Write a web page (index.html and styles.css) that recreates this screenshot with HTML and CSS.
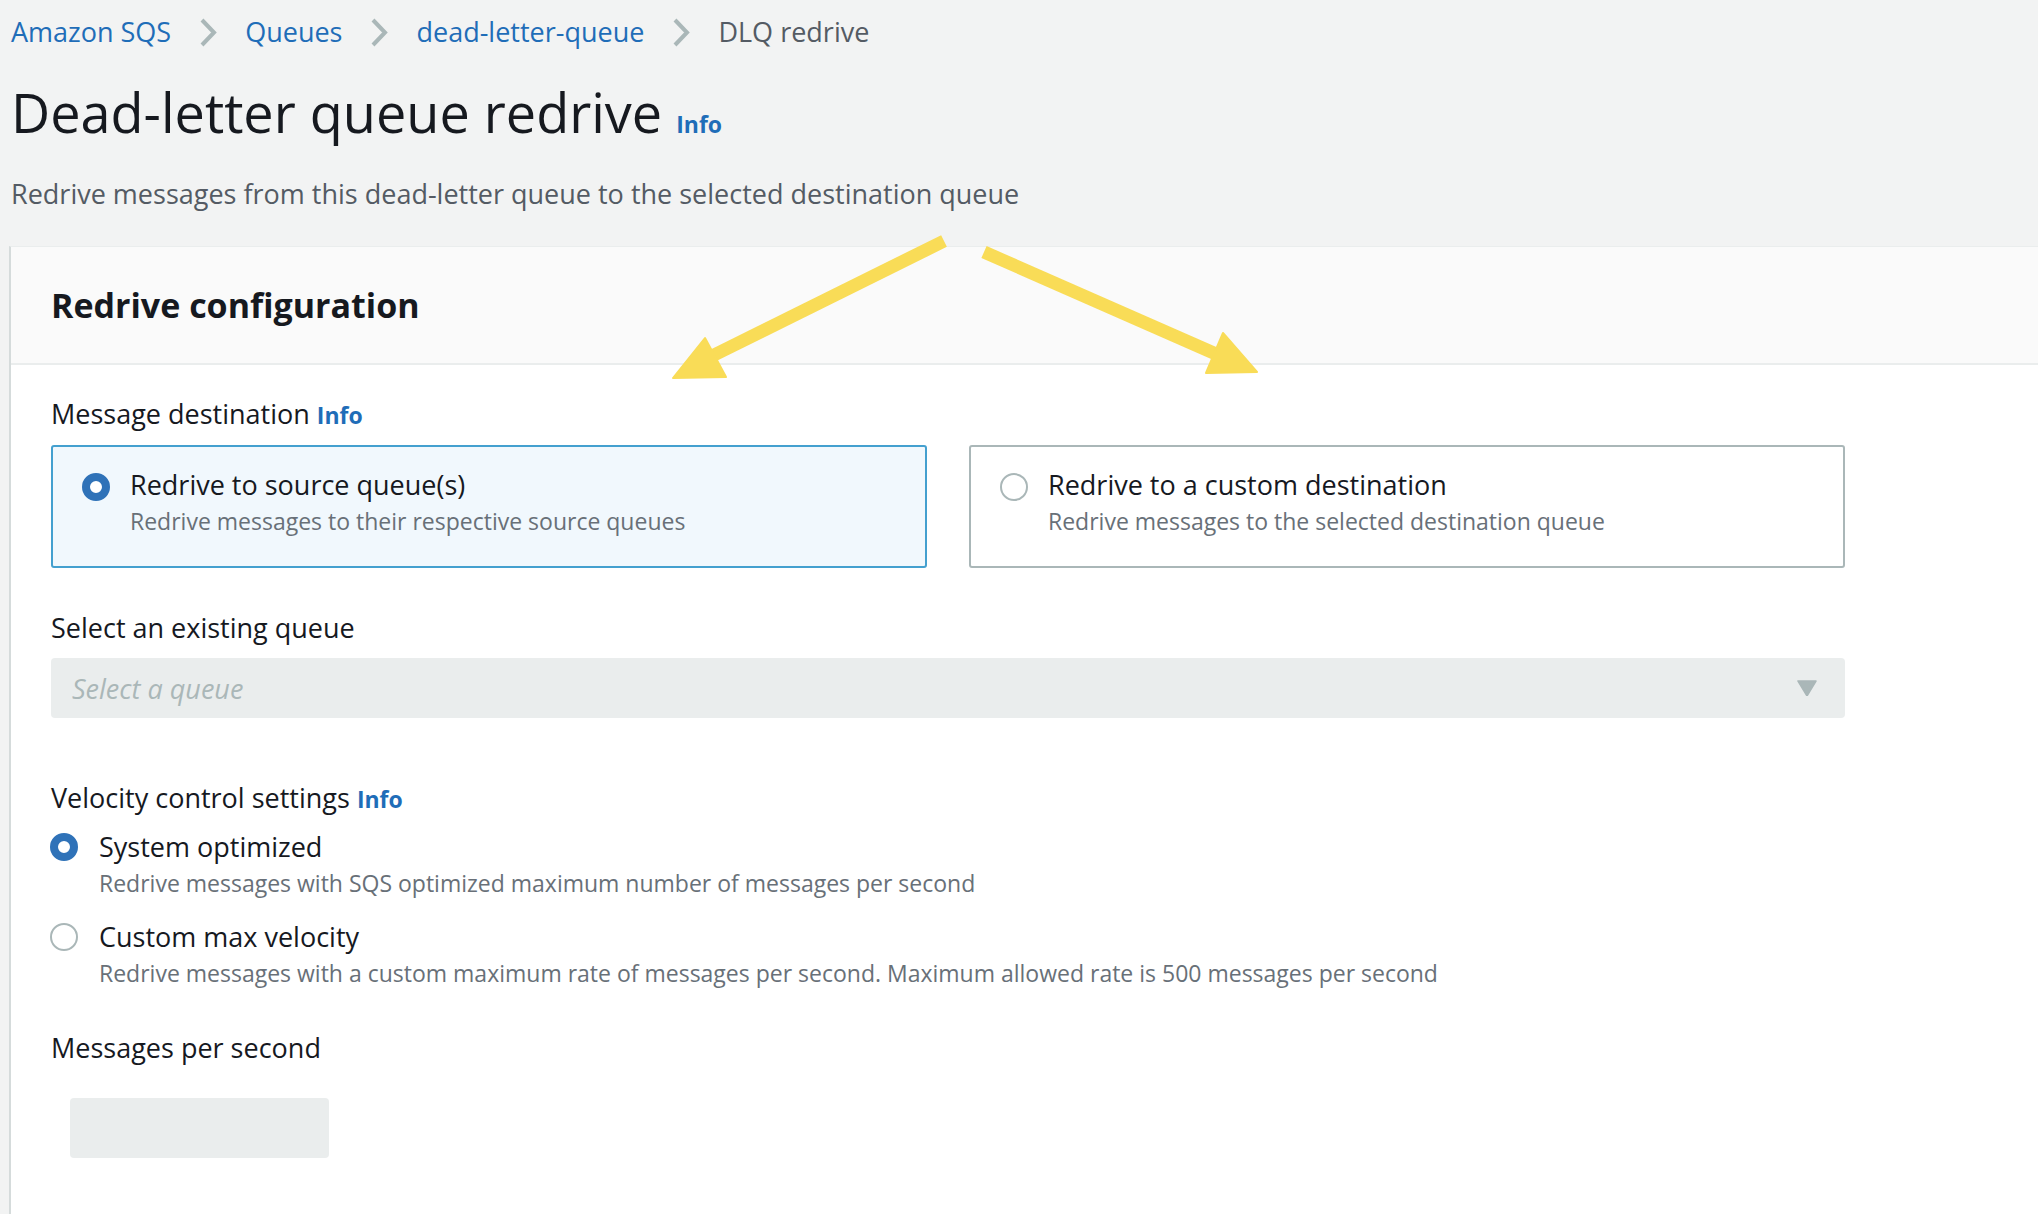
FILE: index.html
```html
<!DOCTYPE html>
<html lang="en">

<head>
    <meta charset="UTF-8">
    <meta name="viewport" content="width=device-width, initial-scale=1.0">
    <title>DLQ redrive</title>
    <link rel="stylesheet" href="styles.css">
</head>

<body>
    <div class="page">
        <nav class="breadcrumb">
            <a href="#">Amazon SQS</a>
            <svg class="crumb-sep" width="18" height="29" viewBox="0 0 18 29"><polyline points="3,2 15,14.5 3,27" fill="none" stroke="#aab7b8" stroke-width="4"/></svg>
            <a href="#">Queues</a>
            <svg class="crumb-sep" width="18" height="29" viewBox="0 0 18 29"><polyline points="3,2 15,14.5 3,27" fill="none" stroke="#aab7b8" stroke-width="4"/></svg>
            <a href="#">dead-letter-queue</a>
            <svg class="crumb-sep" width="18" height="29" viewBox="0 0 18 29"><polyline points="3,2 15,14.5 3,27" fill="none" stroke="#aab7b8" stroke-width="4"/></svg>
            <span class="current">DLQ redrive</span>
        </nav>

        <h1 class="page-title">Dead-letter queue redrive <a href="#" class="info">Info</a></h1>
        <p class="page-desc">Redrive messages from this dead-letter queue to the selected destination queue</p>

        <div class="panel">
            <div class="panel-header">
                <h2>Redrive configuration</h2>
            </div>

            <div class="panel-body">
                <div class="field-label">Message destination <a href="#" class="info">Info</a></div>
                <div class="tiles">
                    <div class="tile selected">
                        <span class="radio checked"></span>
                        <div>
                            <div class="option-title">Redrive to source queue(s)</div>
                            <div class="option-desc">Redrive messages to their respective source queues</div>
                        </div>
                    </div>
                    <div class="tile">
                        <span class="radio"></span>
                        <div>
                            <div class="option-title">Redrive to a custom destination</div>
                            <div class="option-desc">Redrive messages to the selected destination queue</div>
                        </div>
                    </div>
                </div>

                <div class="field-label gap-select">Select an existing queue</div>
                <div class="select">
                    <span class="placeholder">Select a queue</span>
                    <svg width="20" height="16" viewBox="0 0 20 16"><polygon points="1,1 19,1 10,16" fill="#aab7b8" stroke="#aab7b8" stroke-width="1.5" stroke-linejoin="round"/></svg>
                </div>

                <div class="field-label gap-velocity">Velocity control settings <a href="#" class="info">Info</a></div>
                <div class="option-row first">
                    <span class="radio checked"></span>
                    <div>
                        <div class="option-title">System optimized</div>
                        <div class="option-desc">Redrive messages with SQS optimized maximum number of messages per second</div>
                    </div>
                </div>
                <div class="option-row">
                    <span class="radio"></span>
                    <div>
                        <div class="option-title">Custom max velocity</div>
                        <div class="option-desc">Redrive messages with a custom maximum rate of messages per second. Maximum allowed rate is 500 messages per second</div>
                    </div>
                </div>

                <div class="field-label gap-rate">Messages per second</div>
                <div class="number-input"></div>
            </div>
        </div>
    </div>

    <!-- annotation arrows drawn over the screenshot -->
    <svg class="arrows" width="2038" height="1214" viewBox="0 0 2038 1214">
        <line x1="944" y1="241" x2="712" y2="356" stroke="#f9dc57" stroke-width="13"/>
        <polygon points="673,378 705,338 726,377" fill="#f9dc57" stroke="#f9dc57" stroke-width="2" stroke-linejoin="round"/>
        <line x1="984" y1="252" x2="1216" y2="354" stroke="#f9dc57" stroke-width="13"/>
        <polygon points="1257,372 1223,333 1206,373" fill="#f9dc57" stroke="#f9dc57" stroke-width="2" stroke-linejoin="round"/>
    </svg>
</body>

</html>
```

FILE: styles.css
```css
body {
    margin: 0;
    background: #f2f3f3;
    font-family: "Open Sans", "Noto Sans", sans-serif;
    color: #16191f;
    overflow: hidden;
}

a {
    text-decoration: none;
}

.page {
    padding: 14px 0 0 9px;
}

.breadcrumb {
    display: flex;
    align-items: center;
    gap: 28px;
    padding-left: 2px;
    font-size: 27px;
    line-height: 36px;
}

.breadcrumb a {
    color: #1f6db8;
}

.breadcrumb .current {
    color: #545b64;
}

.crumb-sep {
    display: block;
}

.page-title {
    margin: 28px 0 0 0;
    padding-left: 2px;
    font-size: 54px;
    line-height: 68px;
    height: 68px;
    font-weight: 400;
    color: #16191f;
}

.info {
    color: #1f6db8;
    font-weight: 700;
    font-size: 23px;
    line-height: 1;
}

.page-desc {
    margin: 30px 0 0 0;
    padding-left: 2px;
    font-size: 27px;
    line-height: 36px;
    color: #545b64;
}

.panel {
    margin-top: 34px;
    background: #fff;
    border-left: 2px solid #d5dbdb;
    border-top: 1px solid #eaeded;
    min-height: 1000px;
}

.panel-header {
    background: #fafafa;
    padding: 36px 40px;
    border-bottom: 2px solid #eaeded;
}

.panel-header h2 {
    margin: 0;
    font-size: 34px;
    line-height: 44px;
    font-weight: 700;
}

.panel-body {
    width: 1794px;
    padding: 31px 40px 0 40px;
}

.field-label {
    font-size: 27px;
    line-height: 36px;
}

.tiles {
    display: grid;
    grid-template-columns: 1fr 1fr;
    gap: 42px;
    margin-top: 13px;
}

.tile {
    display: flex;
    align-items: flex-start;
    gap: 20px;
    padding: 20px 29px 29px 29px;
    border: 2px solid #aab7b8;
    border-radius: 3px;
    background: #fff;
}

.tile.selected {
    border-color: #44a0cf;
    background: #f1f8fd;
}

.tile .radio {
    margin-top: 6px;
}

.radio {
    flex: none;
    box-sizing: border-box;
    width: 28px;
    height: 28px;
    border-radius: 50%;
    border: 2px solid #aab7b8;
    background: #fff;
}

.radio.checked {
    border: 8px solid #2f72b8;
}

.option-title {
    font-size: 27px;
    line-height: 36px;
    color: #16191f;
}

.option-desc {
    margin-top: 2px;
    font-size: 23px;
    line-height: 32px;
    color: #687078;
}

.gap-select {
    margin-top: 42px;
}

.select {
    display: flex;
    align-items: center;
    justify-content: space-between;
    height: 60px;
    margin-top: 12px;
    padding: 0 28px 0 21px;
    background: #eaeded;
    border-radius: 4px;
}

.placeholder {
    font-style: italic;
    font-size: 27px;
    color: #aab7b8;
}

.gap-velocity {
    margin-top: 62px;
}

.option-row {
    display: flex;
    align-items: flex-start;
    gap: 21px;
    margin-top: 20px;
    margin-left: -1px;
}

.option-row.first {
    margin-top: 13px;
}

.option-row .radio {
    margin-top: 4px;
}

.gap-rate {
    margin-top: 41px;
}

.number-input {
    width: 259px;
    height: 60px;
    margin: 32px 0 0 19px;
    background: #eaeded;
    border-radius: 4px;
}

.arrows {
    position: absolute;
    top: 0;
    left: 0;
    pointer-events: none;
}
```
